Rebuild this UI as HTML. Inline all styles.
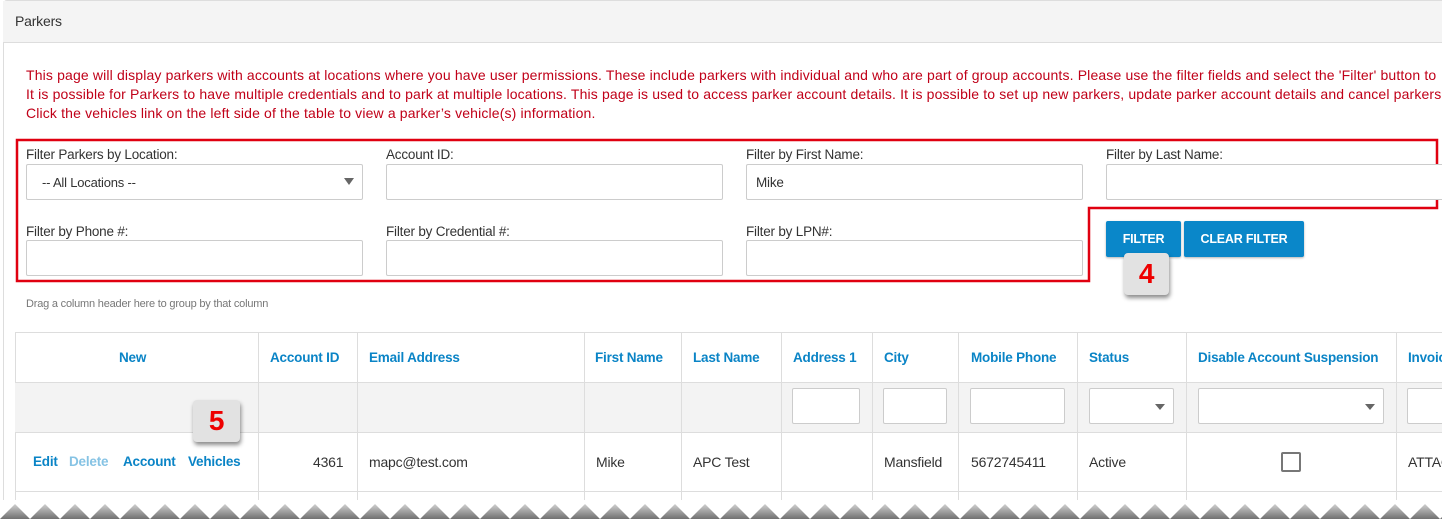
<!DOCTYPE html>
<html style="width:1442px;height:519px;overflow:hidden"><head><meta charset="utf-8"><style>
*{box-sizing:border-box;margin:0;padding:0}
body{width:1442px;height:519px;overflow:hidden;background:#fff;font-family:"Liberation Sans",sans-serif;font-size:13px;color:#333;position:relative;letter-spacing:-0.2px}
.a{position:absolute;white-space:nowrap}
.panel{position:absolute;left:3px;top:0;width:1450px;height:515px;border:1px solid #ddd;border-radius:4px}
.head{position:absolute;left:3px;top:1px;width:1450px;height:42px;background:#f4f4f4;border-bottom:1px solid #ddd}
.red{color:#c00018;font-size:14px;line-height:19px;letter-spacing:0.15px}
.inp{position:absolute;border:1px solid #ccc;border-radius:2px;background:#fff;height:36px}
.lbl{position:absolute;font-size:13.5px;color:#333}
.btn{position:absolute;background:#0a87c9;color:#fff;font-weight:bold;font-size:12.5px;text-align:center;line-height:36px;border-radius:2px;box-shadow:0 1px 2px rgba(0,0,0,.3)}
.badge{position:absolute;background:#e2e2e2;border-radius:4px;color:#e00;font-weight:bold;font-size:28px;text-align:center;box-shadow:1px 3px 4px rgba(0,0,0,.45)}
.th{position:absolute;top:350px;color:#0a84c6;font-weight:bold;font-size:13.5px}
.td{position:absolute;top:454px;font-size:14px;color:#333}
.vl{position:absolute;top:332px;width:1px;height:175px;background:#ddd}
.hl{position:absolute;left:15px;width:1430px;height:1px;background:#ddd}
</style></head><body>
<div class="panel"></div>
<div class="head"></div>
<div class="a" style="left:15px;top:13px;font-size:14px;color:#333">Parkers</div>
<div class="a red" style="left:26px;top:66px">This page will display parkers with accounts at locations where you have user permissions. These include parkers with individual and who are part of group accounts. Please use the filter fields and select the 'Filter' button to</div>
<div class="a red" style="left:26px;top:85px">It is possible for Parkers to have multiple credentials and to park at multiple locations. This page is used to access parker account details. It is possible to set up new parkers, update parker account details and cancel parkers w</div>
<div class="a red" style="left:26px;top:104px">Click the vehicles link on the left side of the table to view a parker’s vehicle(s) information.</div>

<svg class="a" style="left:0;top:0" width="1442" height="300"><path d="M17 140 H1437 V208 H1089 V281 H17 Z" fill="none" stroke="#e00010" stroke-width="2.5"/></svg>

<div class="lbl" style="left:26px;top:147px">Filter Parkers by Location:</div>
<div class="inp" style="left:26px;top:164px;width:337px"><span class="a" style="left:15px;top:10px">-- All Locations --</span><span class="a" style="right:8px;top:13px;width:0;height:0;border-left:5px solid transparent;border-right:5px solid transparent;border-top:7px solid #666"></span></div>
<div class="lbl" style="left:386px;top:147px">Account ID:</div>
<div class="inp" style="left:386px;top:164px;width:337px"></div>
<div class="lbl" style="left:746px;top:147px">Filter by First Name:</div>
<div class="inp" style="left:746px;top:164px;width:337px"><span class="a" style="left:9px;top:10px;font-size:13.5px">Mike</span></div>
<div class="lbl" style="left:1106px;top:147px">Filter by Last Name:</div>
<div class="inp" style="left:1106px;top:164px;width:340px"></div>

<div class="lbl" style="left:26px;top:224px">Filter by Phone #:</div>
<div class="inp" style="left:26px;top:240px;width:337px"></div>
<div class="lbl" style="left:386px;top:224px">Filter by Credential #:</div>
<div class="inp" style="left:386px;top:240px;width:337px"></div>
<div class="lbl" style="left:746px;top:224px">Filter by LPN#:</div>
<div class="inp" style="left:746px;top:240px;width:337px"></div>

<div class="btn" style="left:1106px;top:221px;width:75px">FILTER</div>
<div class="btn" style="left:1184px;top:221px;width:120px">CLEAR FILTER</div>
<div class="badge" style="left:1124px;top:253px;width:45px;height:42px;line-height:42px">4</div>

<div class="a" style="left:26px;top:298px;font-size:11px;color:#777">Drag a column header here to group by that column</div>

<div style="position:absolute;left:15px;top:332px;width:1430px;height:175px;border:1px solid #ddd;border-right:none;border-bottom:none"></div>
<div style="position:absolute;left:15px;top:382px;width:1430px;height:50px;background:#f3f3f3"></div>
<div class="hl" style="top:382px"></div>
<div class="hl" style="top:432px"></div>
<div class="hl" style="top:491px"></div>
<div class="vl" style="left:258px"></div><div class="vl" style="left:357px"></div><div class="vl" style="left:584px"></div><div class="vl" style="left:681px"></div><div class="vl" style="left:781px"></div><div class="vl" style="left:872px"></div><div class="vl" style="left:958px"></div><div class="vl" style="left:1077px"></div><div class="vl" style="left:1186px"></div><div class="vl" style="left:1396px"></div>

<div class="th" style="left:119px">New</div>
<div class="th" style="left:270px">Account ID</div>
<div class="th" style="left:369px">Email Address</div>
<div class="th" style="left:595px">First Name</div>
<div class="th" style="left:693px">Last Name</div>
<div class="th" style="left:793px">Address 1</div>
<div class="th" style="left:884px">City</div>
<div class="th" style="left:971px">Mobile Phone</div>
<div class="th" style="left:1089px">Status</div>
<div class="th" style="left:1198px">Disable Account Suspension</div>
<div class="th" style="left:1408px">Invoice</div>

<div class="inp" style="left:792px;top:388px;width:68px"></div>
<div class="inp" style="left:883px;top:388px;width:64px"></div>
<div class="inp" style="left:970px;top:388px;width:95px"></div>
<div class="inp" style="left:1089px;top:388px;width:85px"><span class="a" style="right:8px;top:15px;border-left:5px solid transparent;border-right:5px solid transparent;border-top:6px solid #666"></span></div>
<div class="inp" style="left:1198px;top:388px;width:186px"><span class="a" style="right:8px;top:15px;border-left:5px solid transparent;border-right:5px solid transparent;border-top:6px solid #666"></span></div>
<div class="inp" style="left:1407px;top:388px;width:50px"></div>

<div class="badge" style="left:193px;top:400px;width:47px;height:42px;line-height:42px">5</div>

<div class="td" style="left:33px;color:#0a84c6;font-weight:bold;font-size:13.5px">Edit</div>
<div class="td" style="left:69px;color:#86c3e4;font-weight:bold;font-size:13.5px">Delete</div>
<div class="td" style="left:123px;color:#0a84c6;font-weight:bold;font-size:13.5px">Account</div>
<div class="td" style="left:188px;color:#0a84c6;font-weight:bold;font-size:13.5px">Vehicles</div>
<div class="td" style="left:313px">4361</div>
<div class="td" style="left:369px">mapc@test.com</div>
<div class="td" style="left:596px">Mike</div>
<div class="td" style="left:693px">APC Test</div>
<div class="td" style="left:884px">Mansfield</div>
<div class="td" style="left:971px">5672745411</div>
<div class="td" style="left:1089px">Active</div>
<div class="a" style="left:1281px;top:452px;width:20px;height:20px;border:2px solid #777;border-radius:2px"></div>
<div class="td" style="left:1408px">ATTAC</div>

<svg class="a" style="left:0;top:500px" width="1442" height="19">
<defs><linearGradient id="g" x1="0" y1="0" x2="0" y2="1"><stop offset="0" stop-color="#d0d0d0"/><stop offset="1" stop-color="#707070"/></linearGradient>
<pattern id="p" x="0" y="0" width="30" height="19" patternUnits="userSpaceOnUse"><polygon points="0,19 15,4 30,19" fill="url(#g)"/></pattern></defs>
<rect x="0" y="0" width="1442" height="19" fill="#fff"/>
<rect x="0" y="0" width="1442" height="19" fill="url(#p)"/>
</svg>
</body></html>
